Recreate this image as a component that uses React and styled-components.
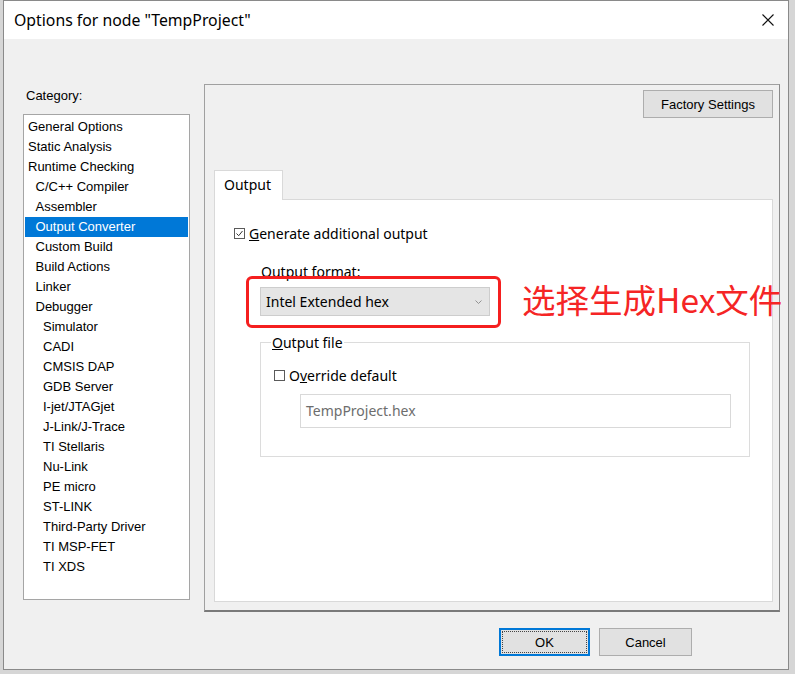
import React from 'react'
import styled, { createGlobalStyle } from 'styled-components'

const GlobalStyle = createGlobalStyle`
    html, body {
        margin: 0;
        padding: 0;
        background: #d6d6d6;
    }
    body {
        width: 795px;
        height: 674px;
        overflow: hidden;
        font-family: "Noto Sans", "Liberation Sans", sans-serif;
    }
`

const StyledWindow = styled.div`
    position: relative;
    margin-left: 3px;
    width: 786px;
    height: 670px;
    box-sizing: border-box;
    border: 1px solid #8a8a8a;
    background: #f0f0f0;
    display: flex;
    flex-direction: column;
`

const StyledTitleBar = styled.div`
    height: 38px;
    background: #ffffff;
    display: flex;
    align-items: center;
    justify-content: space-between;
    padding: 0 14px 0 10px;
    font-size: 15.8px;
    color: #000;
`

const StyledBody = styled.div`
    display: flex;
    gap: 14px;
    padding: 45px 0 0 19px;
`

const StyledLeftColumn = styled.div`
    display: flex;
    flex-direction: column;
    width: 167px;
`

const StyledLabel = styled.div`
    font-family: "Liberation Sans", Arial, sans-serif;
    font-size: 13px;
    line-height: 16px;
    margin: 4px 0 10px 3px;
    color: #000;
`

const StyledList = styled.ul`
    list-style: none;
    margin: 0;
    padding: 2px 1px;
    height: 486px;
    box-sizing: border-box;
    background: #fff;
    border: 1px solid #a5a5a5;
`

const StyledItem = styled.li`
    height: 20px;
    line-height: 20px;
    padding-left: ${(p) => 3 + p.$level * 7.5}px;
    font-family: "Liberation Sans", Arial, sans-serif;
    font-size: 13px;
    white-space: nowrap;
    background: ${(p) => (p.$selected ? '#0078d7' : 'transparent')};
    color: ${(p) => (p.$selected ? '#fff' : '#000')};
`

const StyledPanel = styled.div`
    width: 576px;
    height: 528px;
    box-sizing: border-box;
    border: 1px solid #a0a0a0;
    border-right-color: #8a8a8a;
    border-bottom: 2px solid #7a7a7a;
    padding: 5px 6px 8px 9px;
    display: flex;
    flex-direction: column;
`

const StyledButton = styled.button`
    height: 28px;
    width: ${(p) => p.$width}px;
    box-sizing: border-box;
    background: #e1e1e1;
    border: 1px solid ${(p) => (p.$default ? '#0078d7' : '#adadad')};
    font-family: "Liberation Sans", Arial, sans-serif;
    font-size: 13px;
    color: #000;
    padding: 0;
    position: relative;
    box-shadow: ${(p) => (p.$default ? 'inset 0 0 0 1px #0078d7' : 'none')};
    outline: ${(p) => (p.$default ? '1px dotted #444' : 'none')};
    outline-offset: -4px;
`

const StyledFactoryRow = styled.div`
    display: flex;
    justify-content: flex-end;
`

const StyledTabStrip = styled.div`
    display: flex;
    margin-top: 52px;
`

const StyledTab = styled.div`
    width: 69px;
    height: 30px;
    box-sizing: border-box;
    background: #fff;
    border: 1px solid #d9d9d9;
    border-bottom: none;
    padding-left: 9px;
    line-height: 28px;
    font-size: 14px;
    color: #000;
    margin-bottom: -1px;
    position: relative;
    z-index: 1;
`

const StyledTabPage = styled.div`
    flex: 1;
    background: #fff;
    border: 1px solid #d9d9d9;
    padding: 24px 0 0 19px;
    display: flex;
    flex-direction: column;
`

const StyledCheckRow = styled.label`
    display: flex;
    align-items: center;
    gap: 4px;
    height: 18px;
    font-size: 14px;
    color: #000;
`

const StyledCheckBox = styled.span`
    width: 9px;
    height: 9px;
    border: 1px solid #5a5a5a;
    background: #fff;
    display: inline-flex;
    align-items: center;
    justify-content: center;
    margin-top: 1px;
`

const StyledFieldLabel = styled.div`
    font-size: 14px;
    color: #000;
    margin: 21px 0 0 27px;
    line-height: 18px;
`

const StyledHighlight = styled.div`
    position: relative;
    margin: 6px 0 0 26px;
    width: 230px;

    &::before {
        content: '';
        position: absolute;
        left: -14px;
        top: -11px;
        right: -11px;
        bottom: -12px;
        border: 3px solid #f51f1f;
        border-radius: 6px;
    }
`

const StyledCombo = styled.div`
    height: 29px;
    box-sizing: border-box;
    background: #e5e5e5;
    border: 1px solid #cdcdcd;
    display: flex;
    align-items: center;
    justify-content: space-between;
    padding: 0 7px 0 5px;
    font-size: 14px;
    color: #000;
`

const StyledGroup = styled.fieldset`
    margin: 17px 0 0 26px;
    width: 490px;
    height: 124px;
    box-sizing: border-box;
    border: 1px solid #dcdcdc;
    padding: 14px 0 0 13px;
    display: flex;
    flex-direction: column;
`

const StyledLegend = styled.legend`
    font-size: 14px;
    color: #000;
    padding: 0 1px;
    margin-left: -3px;
`

const StyledInput = styled.div`
    margin: 10px 0 0 26px;
    width: 431px;
    height: 34px;
    box-sizing: border-box;
    border: 1px solid #d9d9d9;
    padding-left: 5px;
    line-height: 32px;
    font-size: 14px;
    color: #6d6d6d;
`

const StyledFooter = styled.div`
    display: flex;
    justify-content: flex-end;
    gap: 9px;
    padding: 16px 96px 0 0;
`

const StyledNote = styled.div`
    position: absolute;
    left: 518px;
    top: 278px;
    font-family: "Noto Sans CJK SC", "Noto Sans", sans-serif;
    font-size: 33.5px;
    line-height: 40px;
    color: #f52525;
    white-space: nowrap;
`

const categories = [
    ['General Options', 0],
    ['Static Analysis', 0],
    ['Runtime Checking', 0],
    ['C/C++ Compiler', 1],
    ['Assembler', 1],
    ['Output Converter', 1],
    ['Custom Build', 1],
    ['Build Actions', 1],
    ['Linker', 1],
    ['Debugger', 1],
    ['Simulator', 2],
    ['CADI', 2],
    ['CMSIS DAP', 2],
    ['GDB Server', 2],
    ['I-jet/JTAGjet', 2],
    ['J-Link/J-Trace', 2],
    ['TI Stellaris', 2],
    ['Nu-Link', 2],
    ['PE micro', 2],
    ['ST-LINK', 2],
    ['Third-Party Driver', 2],
    ['TI MSP-FET', 2],
    ['TI XDS', 2],
]

function Check({ checked }) {
    return (
        <StyledCheckBox>
            {checked && (
                <svg width="7" height="7" viewBox="0 0 7 7">
                    <path d="M0.5 3.5 L2.7 5.7 L6.5 1" fill="none" stroke="#333" strokeWidth="1" />
                </svg>
            )}
        </StyledCheckBox>
    )
}

export default function App() {
    return (
        <>
            <GlobalStyle />
            <StyledWindow>
                <StyledTitleBar>
                    <span>Options for node "TempProject"</span>
                    <svg width="12" height="12" viewBox="0 0 12 12">
                        <path d="M0.5 0.5 L11.5 11.5 M11.5 0.5 L0.5 11.5" stroke="#111" strokeWidth="1.1" />
                    </svg>
                </StyledTitleBar>
                <StyledBody>
                    <StyledLeftColumn>
                        <StyledLabel>Category:</StyledLabel>
                        <StyledList>
                            {categories.map(([name, level]) => (
                                <StyledItem key={name} $level={level} $selected={name === 'Output Converter'}>
                                    {name}
                                </StyledItem>
                            ))}
                        </StyledList>
                    </StyledLeftColumn>
                    <StyledPanel>
                        <StyledFactoryRow>
                            <StyledButton $width={130}>Factory Settings</StyledButton>
                        </StyledFactoryRow>
                        <StyledTabStrip>
                            <StyledTab>Output</StyledTab>
                        </StyledTabStrip>
                        <StyledTabPage>
                            <StyledCheckRow>
                                <Check checked />
                                <span>
                                    <u>G</u>enerate additional output
                                </span>
                            </StyledCheckRow>
                            <StyledFieldLabel>Output format:</StyledFieldLabel>
                            <StyledHighlight>
                                <StyledCombo>
                                    <span>Intel Extended hex</span>
                                    <svg width="7" height="4" viewBox="0 0 7 4">
                                        <path d="M0.5 0.5 L3.5 3.5 L6.5 0.5" fill="none" stroke="#888" strokeWidth="0.9" />
                                    </svg>
                                </StyledCombo>
                            </StyledHighlight>
                            <StyledGroup>
                                <StyledLegend>
                                    <u>O</u>utput file
                                </StyledLegend>
                                <StyledCheckRow>
                                    <Check />
                                    <span>
                                        O<u>v</u>erride default
                                    </span>
                                </StyledCheckRow>
                                <StyledInput>TempProject.hex</StyledInput>
                            </StyledGroup>
                        </StyledTabPage>
                    </StyledPanel>
                </StyledBody>
                <StyledFooter>
                    <StyledButton $width={91} $default>
                        OK
                    </StyledButton>
                    <StyledButton $width={93}>Cancel</StyledButton>
                </StyledFooter>
                <StyledNote>选择生成Hex文件</StyledNote>
            </StyledWindow>
        </>
    )
}
